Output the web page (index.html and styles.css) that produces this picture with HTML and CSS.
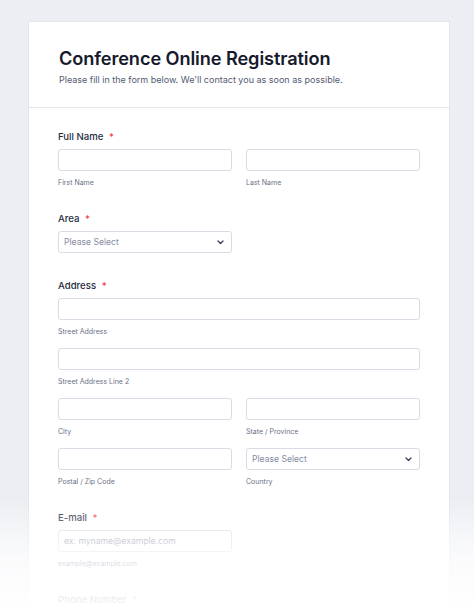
FILE: index.html
```html
<!DOCTYPE html>
<html>
<head>
<meta charset="utf-8">
<link rel="stylesheet" href="styles.css">
</head>
<body>
<div class="page">
  <div class="card">
    <div class="header">
      <h1 class="title">Conference Online Registration</h1>
      <p class="subtitle">Please fill in the form below. We'll contact you as soon as possible.</p>
    </div>
    <div class="body">
      <div class="field">
        <div class="label">Full Name <span class="req">*</span></div>
        <div class="row">
          <div class="col"><div class="input"></div><div class="sub">First Name</div></div>
          <div class="col"><div class="input"></div><div class="sub">Last Name</div></div>
        </div>
      </div>
      <div class="field field-nosub">
        <div class="label">Area <span class="req">*</span></div>
        <div class="row">
          <div class="col"><div class="input select"><span class="ph">Please Select</span><svg class="chev" width="7" height="5" viewBox="0 0 7 5"><path d="M1 1 L3.5 3.5 L6 1" fill="none" stroke="#3a4056" stroke-width="1.3" stroke-linecap="round" stroke-linejoin="round"/></svg></div></div>
          <div class="col"></div>
        </div>
      </div>
      <div class="field">
        <div class="label">Address <span class="req">*</span></div>
        <div class="stack">
          <div><div class="input"></div><div class="sub">Street Address</div></div>
          <div><div class="input"></div><div class="sub">Street Address Line 2</div></div>
          <div class="row">
            <div class="col"><div class="input"></div><div class="sub">City</div></div>
            <div class="col"><div class="input"></div><div class="sub">State / Province</div></div>
          </div>
          <div class="row">
            <div class="col"><div class="input"></div><div class="sub">Postal / Zip Code</div></div>
            <div class="col"><div class="input select"><span class="ph">Please Select</span><svg class="chev" width="7" height="5" viewBox="0 0 7 5"><path d="M1 1 L3.5 3.5 L6 1" fill="none" stroke="#3a4056" stroke-width="1.3" stroke-linecap="round" stroke-linejoin="round"/></svg></div><div class="sub">Country</div></div>
          </div>
        </div>
      </div>
      <div class="field">
        <div class="label">E-mail <span class="req">*</span></div>
        <div class="row">
          <div class="col"><div class="input"><span class="ph">ex: myname@example.com</span></div><div class="sub">example@example.com</div></div>
          <div class="col"></div>
        </div>
      </div>
      <div class="field">
        <div class="label">Phone Number <span class="req">*</span></div>
      </div>
    </div>
  </div>
</div>
<div class="fade"></div>
</body>
</html>
```
FILE: styles.css
```css
html, body {
  margin: 0;
  padding: 0;
}
body {
  background: #eceef3;
  font-family: Inter, "Noto Sans", sans-serif;
  height: 606px;
  overflow: hidden;
}
.page {
  padding: 22px 25px 0 29px;
}
.card {
  width: 420px;
  background: #ffffff;
  box-shadow: 0 0 0 1px #e3e5ec;
}
.header {
  padding: 24px 30px 20px 30px;
  border-bottom: 1px solid #e4e6ec;
}
.title {
  margin: 0;
  font-size: 18.2px;
  font-weight: 600;
  color: #161a2c;
  line-height: 24px;
  letter-spacing: -0.1px;
}
.subtitle {
  margin: 3px 0 0 0;
  font-size: 9px;
  color: #535a72;
  line-height: 14px;
}
.body {
  padding: 22px 29px 0 29px;
  display: flex;
  flex-direction: column;
  gap: 25px;
}
.field-nosub {
  margin-bottom: 1px;
}
.label {
  font-size: 9.6px;
  font-weight: 500;
  color: #252a3d;
  line-height: 14px;
  margin-bottom: 5px;
}
.req {
  color: #f23a3c;
  margin-left: 3px;
}
.row {
  display: flex;
  gap: 14px;
}
.col {
  flex: 1;
}
.stack {
  display: flex;
  flex-direction: column;
  gap: 12px;
}
.input {
  height: 20px;
  border: 1px solid #d9dce5;
  border-radius: 3px;
  background: #fff;
  display: flex;
  align-items: center;
  padding: 0 5px;
}
.select {
  justify-content: space-between;
  padding-right: 7px;
}
.ph {
  font-size: 8.6px;
  color: #858aa3;
}
.chev {
  display: block;
}
.sub {
  font-size: 7px;
  color: #6a7088;
  margin-top: 7px;
  line-height: 9px;
}
.fade {
  position: fixed;
  left: 0;
  right: 0;
  bottom: 0;
  height: 110px;
  background: linear-gradient(to bottom, rgba(255,255,255,0) 0%, rgba(255,255,255,0.7) 50%, rgba(255,255,255,0.95) 100%);
  pointer-events: none;
}
```
